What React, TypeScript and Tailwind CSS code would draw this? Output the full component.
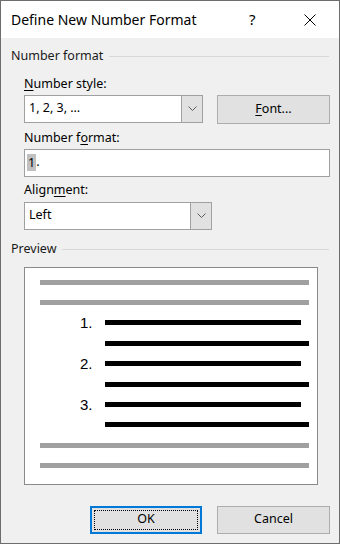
import { useState } from 'react';

const font = { fontFamily: '"Noto Sans", "Open Sans", sans-serif' };

function Chevron() {
    return (
        <svg width="9" height="5" viewBox="0 0 9 5" fill="none">
            <path d="M0.5 0.5 L4.5 4.5 L8.5 0.5" stroke="#5c5c5c" strokeWidth="1" />
        </svg>
    );
}

function Combo({ value, width }: { value: string; width: string }) {
    return (
        <div className={`flex h-[28px] ${width} border border-[#a0a0a0] bg-white`}>
            <div className="flex flex-1 items-center pl-[4px] text-[12.5px] text-black">{value}</div>
            <div className="flex w-[21px] items-center justify-center border-l border-[#a0a0a0] bg-[#e1e1e1]">
                <Chevron />
            </div>
        </div>
    );
}

function GroupTitle({ children }: { children: string }) {
    return (
        <div className="flex items-center gap-[6px] pl-[10px] pr-[10px]">
            <span className="text-[12.5px] text-[#1a1a1a]">{children}</span>
            <div className="h-px flex-1 bg-[#d8d8d8]" />
        </div>
    );
}

function Line({ dark, indent }: { dark?: boolean; indent?: boolean }) {
    return (
        <div className={`flex h-[21px] items-start ${indent ? 'pl-[80px]' : 'pl-[15px]'}`}>
            <div className={`h-[5px] ${dark ? 'bg-black' : 'bg-[#a0a0a0]'} ${indent ? 'w-[204px]' : 'w-[269px]'}`} />
        </div>
    );
}

function Item({ n }: { n: number }) {
    return (
        <>
            <div className="relative flex h-[21px] items-start pl-[80px]">
                <span className="absolute left-[55px] top-[-8px] text-[15px] text-black" style={{ fontFamily: '"Liberation Sans", Arial, sans-serif' }}>{n}.</span>
                <div className="h-[5px] w-[196px] bg-black" />
            </div>
            <Line dark indent />
        </>
    );
}

export default function App() {
    const [style] = useState('1, 2, 3, …');
    return (
        <div className="flex h-[544px] w-[340px] flex-col border border-[#6d6d6d] bg-[#f0f0f0]" style={font}>
            <div className="flex h-[37px] items-center bg-white pl-[10px]">
                <span className="flex-1 text-[14px] text-black">Define New Number Format</span>
                <span className="w-[44px] text-[15px] text-black">?</span>
                <div className="flex w-[46px] items-center justify-center pr-[12px]">
                    <svg width="12" height="12" viewBox="0 0 12 12">
                        <path d="M0.5 0.5 L11.5 11.5 M11.5 0.5 L0.5 11.5" stroke="#000" strokeWidth="1" />
                    </svg>
                </div>
            </div>

            <div className="pt-[9px]">
                <GroupTitle>Number format</GroupTitle>
            </div>

            <div className="flex flex-col pl-[23px] pr-[9px]">
                <div className="mt-[9px] h-[18px] text-[12.5px] leading-[18px] text-black">
                    <span className="underline underline-offset-2">N</span>umber style:
                </div>
                <div className="mt-[2px] flex items-start gap-[14px]">
                    <Combo value={style} width="w-[179px]" />
                    <button className="h-[29px] w-[113px] border border-[#adadad] bg-[#e1e1e1] text-[12.5px] text-black">
                        <span className="underline underline-offset-2">F</span>ont...
                    </button>
                </div>
                <div className="mt-[5px] h-[18px] text-[12.5px] leading-[18px] text-black">
                    Number f<span className="underline underline-offset-2">o</span>rmat:
                </div>
                <div className="mt-[2px] flex h-[28px] items-center border border-[#a0a0a0] bg-white pl-[2px] text-[12.5px] text-black">
                    <span className="inline-block h-[17px] bg-[#c0c0c0] px-[1px] leading-[17px]">1</span>.
                </div>
                <div className="mt-[4px] h-[18px] text-[12.5px] leading-[18px] text-black">
                    Align<span className="underline underline-offset-2">m</span>ent:
                </div>
                <div className="mt-[3px]">
                    <Combo value="Left" width="w-[188px]" />
                </div>
            </div>

            <div className="mt-[10px]">
                <GroupTitle>Preview</GroupTitle>
            </div>

            <div className="mt-[8px] ml-[23px] flex h-[218px] w-[294px] flex-col border border-[#8a8a8a] bg-white pt-[12px]">
                <Line />
                <Line />
                <Item n={1} />
                <Item n={2} />
                <Item n={3} />
                <Line />
                <Line />
            </div>

            <div className="mt-[21px] flex justify-end gap-[15px] pr-[9px]">
                <button className="flex h-[28px] w-[112px] items-center justify-center border-2 border-[#0078d7] bg-[#e1e1e1] p-[2px] text-[12.5px] text-black">
                    <span className="flex h-full w-full items-center justify-center border border-dotted border-black">OK</span>
                </button>
                <button className="h-[28px] w-[113px] border border-[#adadad] bg-[#e1e1e1] text-[12.5px] text-black">Cancel</button>
            </div>
        </div>
    );
}
